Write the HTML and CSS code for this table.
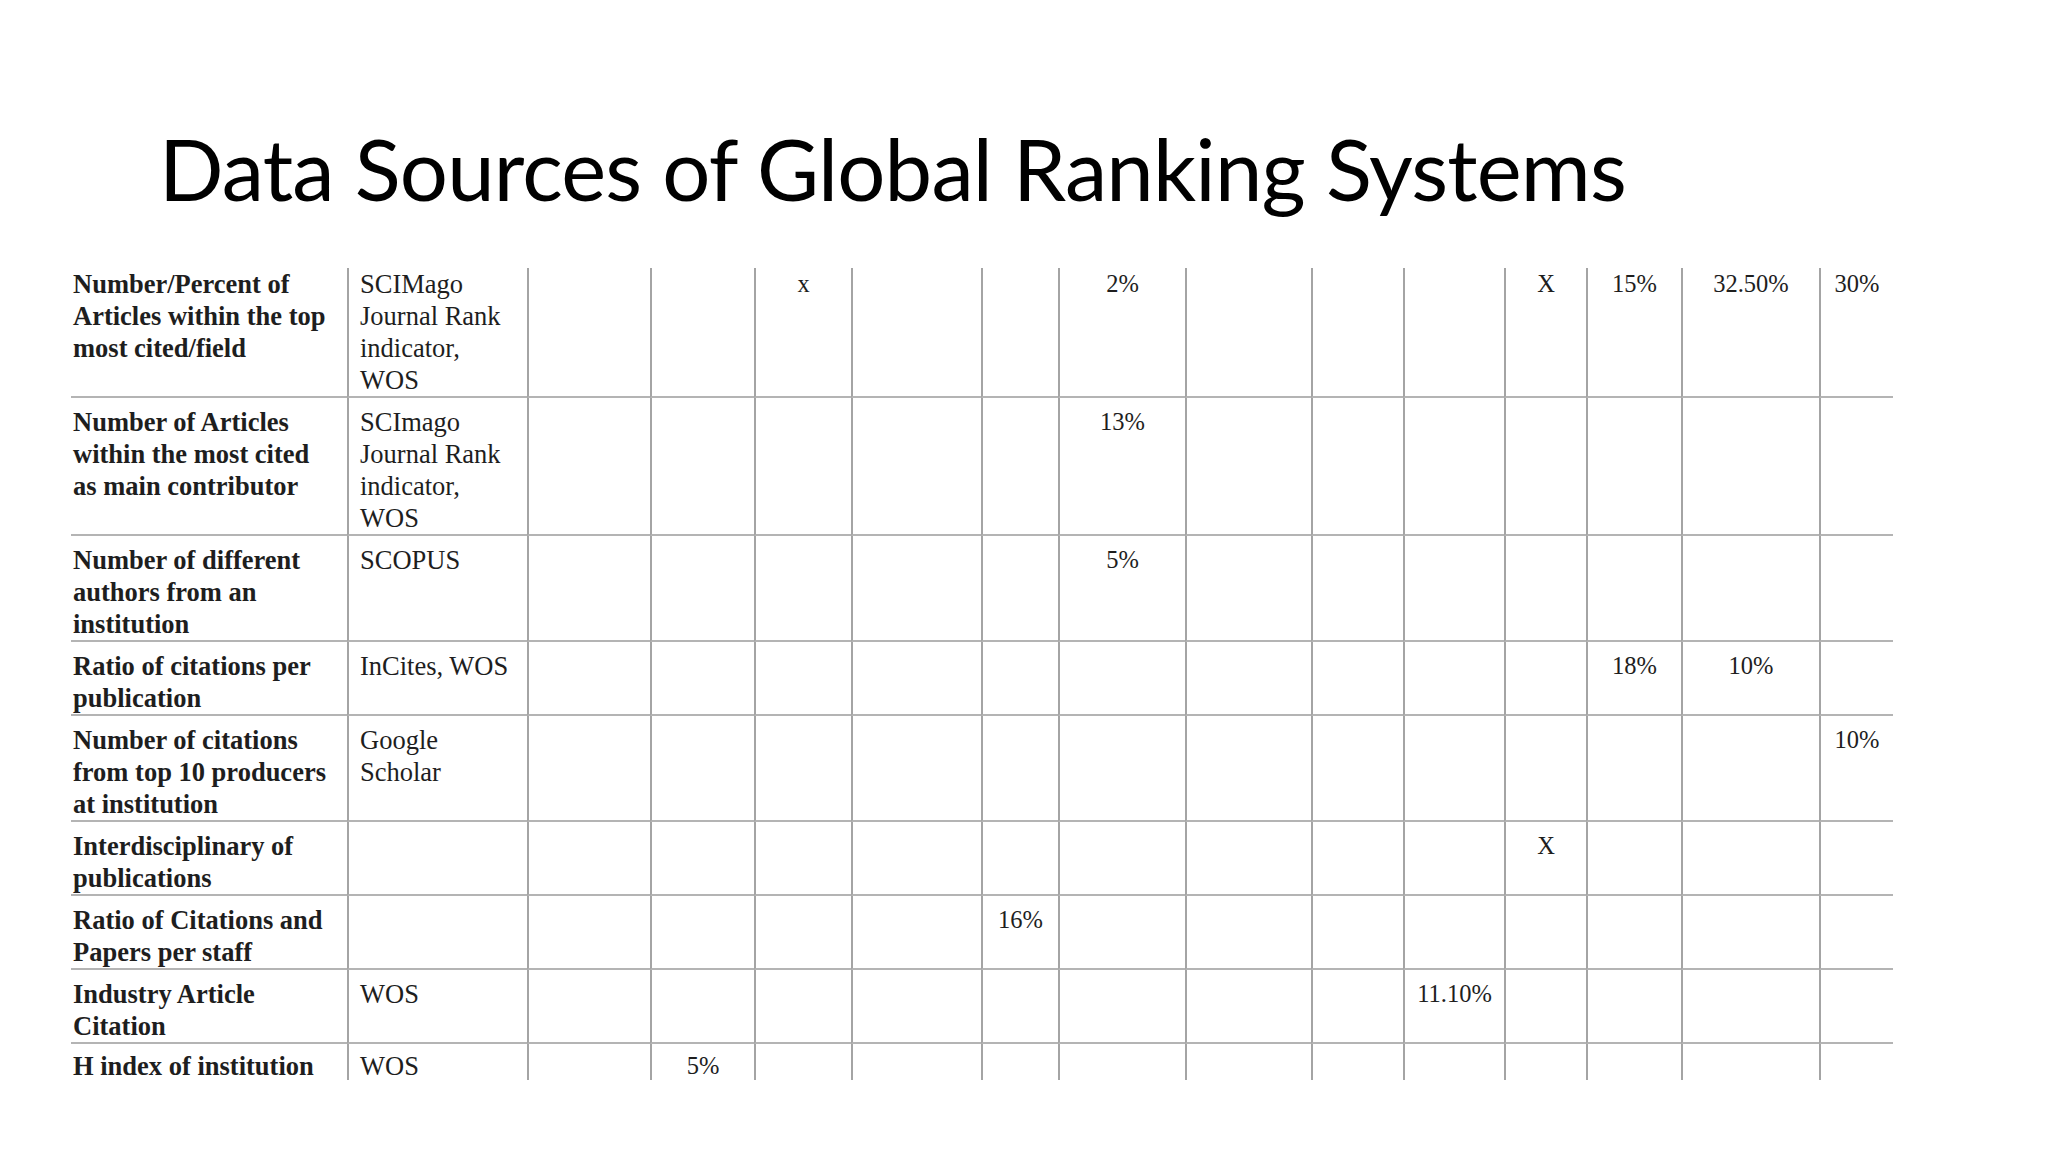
FILE: index.html
```html
<!DOCTYPE html>
<html lang="en">
<head>
<meta charset="utf-8">
<title>Data Sources of Global Ranking Systems</title>
<link rel="stylesheet" href="styles.css">
</head>
<body>
<div class="slide">
  <h1 class="title">Data Sources of Global Ranking Systems</h1>
  <div class="table-wrap">
    <div class="grid">
      <div class="cell label first">Number/Percent of<br>Articles within the top<br>most cited/field</div>
      <div class="cell src first">SCIMago<br>Journal Rank<br>indicator,<br>WOS</div>
      <div class="cell num first"></div>
      <div class="cell num first"></div>
      <div class="cell num first">x</div>
      <div class="cell num first"></div>
      <div class="cell num first"></div>
      <div class="cell num first">2%</div>
      <div class="cell num first"></div>
      <div class="cell num first"></div>
      <div class="cell num first"></div>
      <div class="cell num first">X</div>
      <div class="cell num first">15%</div>
      <div class="cell num first">32.50%</div>
      <div class="cell num first">30%</div>

      <div class="cell label">Number of Articles<br>within the most cited<br>as main contributor</div>
      <div class="cell src">SCImago<br>Journal Rank<br>indicator,<br>WOS</div>
      <div class="cell num"></div>
      <div class="cell num"></div>
      <div class="cell num"></div>
      <div class="cell num"></div>
      <div class="cell num"></div>
      <div class="cell num">13%</div>
      <div class="cell num"></div>
      <div class="cell num"></div>
      <div class="cell num"></div>
      <div class="cell num"></div>
      <div class="cell num"></div>
      <div class="cell num"></div>
      <div class="cell num"></div>

      <div class="cell label">Number of different<br>authors from an<br>institution</div>
      <div class="cell src">SCOPUS</div>
      <div class="cell num"></div>
      <div class="cell num"></div>
      <div class="cell num"></div>
      <div class="cell num"></div>
      <div class="cell num"></div>
      <div class="cell num">5%</div>
      <div class="cell num"></div>
      <div class="cell num"></div>
      <div class="cell num"></div>
      <div class="cell num"></div>
      <div class="cell num"></div>
      <div class="cell num"></div>
      <div class="cell num"></div>

      <div class="cell label">Ratio of citations per<br>publication</div>
      <div class="cell src">InCites, WOS</div>
      <div class="cell num"></div>
      <div class="cell num"></div>
      <div class="cell num"></div>
      <div class="cell num"></div>
      <div class="cell num"></div>
      <div class="cell num"></div>
      <div class="cell num"></div>
      <div class="cell num"></div>
      <div class="cell num"></div>
      <div class="cell num"></div>
      <div class="cell num">18%</div>
      <div class="cell num">10%</div>
      <div class="cell num"></div>

      <div class="cell label">Number of citations<br>from top 10 producers<br>at institution</div>
      <div class="cell src">Google<br>Scholar</div>
      <div class="cell num"></div>
      <div class="cell num"></div>
      <div class="cell num"></div>
      <div class="cell num"></div>
      <div class="cell num"></div>
      <div class="cell num"></div>
      <div class="cell num"></div>
      <div class="cell num"></div>
      <div class="cell num"></div>
      <div class="cell num"></div>
      <div class="cell num"></div>
      <div class="cell num"></div>
      <div class="cell num">10%</div>

      <div class="cell label">Interdisciplinary of<br>publications</div>
      <div class="cell src"></div>
      <div class="cell num"></div>
      <div class="cell num"></div>
      <div class="cell num"></div>
      <div class="cell num"></div>
      <div class="cell num"></div>
      <div class="cell num"></div>
      <div class="cell num"></div>
      <div class="cell num"></div>
      <div class="cell num"></div>
      <div class="cell num">X</div>
      <div class="cell num"></div>
      <div class="cell num"></div>
      <div class="cell num"></div>

      <div class="cell label">Ratio of Citations and<br>Papers per staff</div>
      <div class="cell src"></div>
      <div class="cell num"></div>
      <div class="cell num"></div>
      <div class="cell num"></div>
      <div class="cell num"></div>
      <div class="cell num">16%</div>
      <div class="cell num"></div>
      <div class="cell num"></div>
      <div class="cell num"></div>
      <div class="cell num"></div>
      <div class="cell num"></div>
      <div class="cell num"></div>
      <div class="cell num"></div>
      <div class="cell num"></div>

      <div class="cell label">Industry Article<br>Citation</div>
      <div class="cell src">WOS</div>
      <div class="cell num"></div>
      <div class="cell num"></div>
      <div class="cell num"></div>
      <div class="cell num"></div>
      <div class="cell num"></div>
      <div class="cell num"></div>
      <div class="cell num"></div>
      <div class="cell num"></div>
      <div class="cell num">11.10%</div>
      <div class="cell num"></div>
      <div class="cell num"></div>
      <div class="cell num"></div>
      <div class="cell num"></div>

      <div class="cell label last">H index of institution</div>
      <div class="cell src last">WOS</div>
      <div class="cell num last"></div>
      <div class="cell num last">5%</div>
      <div class="cell num last"></div>
      <div class="cell num last"></div>
      <div class="cell num last"></div>
      <div class="cell num last"></div>
      <div class="cell num last"></div>
      <div class="cell num last"></div>
      <div class="cell num last"></div>
      <div class="cell num last"></div>
      <div class="cell num last"></div>
      <div class="cell num last"></div>
      <div class="cell num last"></div>
    </div>
  </div>
</div>
</body>
</html>
```

FILE: styles.css
```css
html, body {
  margin: 0;
  padding: 0;
  background: #ffffff;
}

.slide {
  width: 2048px;
  height: 1152px;
  overflow: hidden;
  background: #ffffff;
}

.title {
  margin: 0;
  padding: 118px 0 0 159px;
  height: 150px;
  box-sizing: border-box;
  font-family: Lato, "Open Sans", sans-serif;
  font-weight: 400;
  font-size: 85px;
  line-height: 100px;
  letter-spacing: -0.8px;
  color: #000000;
  white-space: nowrap;
}

.table-wrap {
  margin-left: 71px;
  margin-top: 118px;
  width: 1822px;
}

.grid {
  display: grid;
  grid-template-columns: 276px 180px 123px 104px 97px 130px 77px 127px 126px 92px 101px 82px 95px 138px 74px;
}

.cell {
  box-sizing: border-box;
  padding-top: 8px;
  border-left: 2px solid #a4a4a4;
  border-bottom: 2px solid #b4b4b4;
  line-height: 32px;
  color: #1e1e1e;
  white-space: nowrap;
}

.cell.first {
  padding-top: 0;
}

.cell.last {
  border-bottom: none;
  padding-top: 12px;
  line-height: 20px;
  height: 36px;
}

.label {
  border-left: none;
  padding-left: 2px;
  font-family: "Liberation Serif", "DejaVu Serif", serif;
  font-weight: 700;
  font-size: 26.5px;
}

.src {
  padding-left: 11px;
  font-family: "Liberation Serif", "DejaVu Serif", serif;
  font-size: 26.5px;
}

.num {
  text-align: center;
  font-family: "Liberation Serif", "DejaVu Serif", serif;
  font-size: 24.5px;
}
```
